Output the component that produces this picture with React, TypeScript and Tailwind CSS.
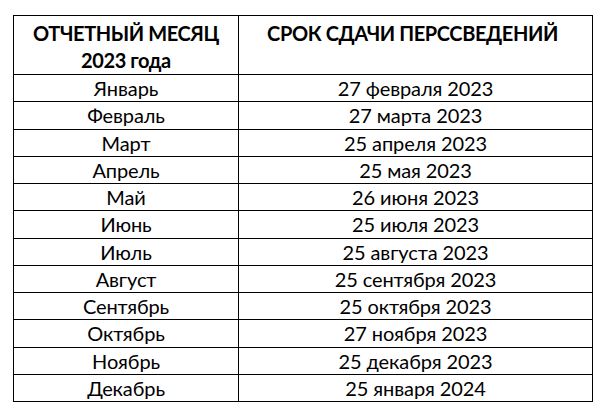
const rows: [string, string][] = [
  ['Январь', '27 февраля 2023'],
  ['Февраль', '27 марта 2023'],
  ['Март', '25 апреля 2023'],
  ['Апрель', '25 мая 2023'],
  ['Май', '26 июня 2023'],
  ['Июнь', '25 июля 2023'],
  ['Июль', '25 августа 2023'],
  ['Август', '25 сентября 2023'],
  ['Сентябрь', '25 октября 2023'],
  ['Октябрь', '27 ноября 2023'],
  ['Ноябрь', '25 декабря 2023'],
  ['Декабрь', '25 января 2024'],
];

export default function App() {
  return (
    <div className="w-[610px] h-[416px] bg-white pl-[13px] pt-[15px] text-black font-['Lato','Open_Sans',sans-serif] text-[20px] leading-[27px]">
      <div className="w-[580px] border border-black">
        {/* Header */}
        <div className="grid grid-cols-[225px_1fr] h-[58px] font-bold tracking-[-0.4px]">
          <div className="border-r border-black text-center pt-[4px]">
            ОТЧЕТНЫЙ МЕСЯЦ
            <br />
            2023 года
          </div>
          <div className="text-center pt-[4px] pr-[6px]">СРОК СДАЧИ ПЕРССВЕДЕНИЙ</div>
        </div>

        {rows.map(([month, due]) => (
          <div key={month} className="grid grid-cols-[225px_1fr] h-[27.25px] border-t border-black tracking-[-0.1px]">
            <div className="border-r border-black flex items-center justify-center">{month}</div>
            <div className="flex items-center justify-center">{due}</div>
          </div>
        ))}
      </div>
    </div>
  );
}
